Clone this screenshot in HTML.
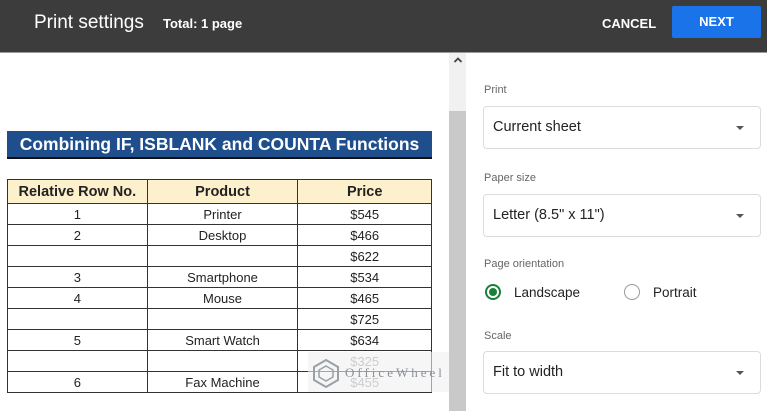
<!DOCTYPE html>
<html><head><style>
*{margin:0;padding:0;box-sizing:border-box}
body{width:767px;height:411px;overflow:hidden;background:#fff;font-family:"Liberation Sans",Arial,sans-serif;position:relative}
.hdr{position:absolute;left:0;top:0;width:767px;height:53px;background:#3c3c3c;border-bottom:1px solid #9a9a9a}
.t1{position:absolute;left:34px;top:12px;color:#fff;font-size:19px}
.t2{position:absolute;left:163px;top:16px;color:#fff;font-size:13px;font-weight:bold}
.cancel{position:absolute;left:602px;top:16px;color:#fff;font-size:13px;font-weight:bold}
.next{position:absolute;left:672px;top:6px;width:89px;height:32px;background:#1a73e8;color:#fff;font-size:13px;font-weight:bold;text-align:center;line-height:32px;border-radius:2px}
.track{position:absolute;left:449px;top:53px;width:17px;height:358px;background:#f1f1f1}
.thumb{position:absolute;left:449px;top:111px;width:17px;height:300px;background:#c9c9c9}
.panel{position:absolute;left:466px;top:53px;width:301px;height:358px;background:#fff}
.lbl{position:absolute;left:484px;font-size:11px;color:#666}
.sel{position:absolute;left:483px;width:278px;height:43px;border:1px solid #dadce0;border-radius:4px;font-size:14.5px;color:#222;padding:12px 0 0 9px}
.sel:after{content:"";position:absolute;right:16px;top:19px;border-left:4.5px solid transparent;border-right:4.5px solid transparent;border-top:4.5px solid #555}
.title{position:absolute;left:7px;top:131px;width:425px;height:28px;background:#1f4e8c;border-bottom:2px solid #111;color:#fff;font-weight:bold;font-size:17.5px;text-align:center;line-height:27px}
table{position:absolute;left:7px;top:179px;width:425px;border-collapse:collapse;font-size:13px;color:#222}
td{border:1px solid #333;height:21px;text-align:center;padding:0}
tr.h td{background:#fdf0cc;font-weight:bold;font-size:14.5px;height:24px;border-width:1.5px}
</style></head><body>
<div class="hdr"><div class="t1">Print settings</div><div class="t2">Total: 1 page</div><div class="cancel">CANCEL</div><div class="next">NEXT</div></div>
<div class="title">Combining IF, ISBLANK and COUNTA Functions</div>
<table>
<col style="width:140px"><col style="width:151px"><col style="width:134px">
<tr class="h"><td>Relative Row No.</td><td>Product</td><td>Price</td></tr>
<tr><td>1</td><td>Printer</td><td>$545</td></tr>
<tr><td>2</td><td>Desktop</td><td>$466</td></tr>
<tr><td></td><td></td><td>$622</td></tr>
<tr><td>3</td><td>Smartphone</td><td>$534</td></tr>
<tr><td>4</td><td>Mouse</td><td>$465</td></tr>
<tr><td></td><td></td><td>$725</td></tr>
<tr><td>5</td><td>Smart Watch</td><td>$634</td></tr>
<tr><td></td><td></td><td style="color:#999">$325</td></tr>
<tr><td>6</td><td>Fax Machine</td><td style="color:#999">$455</td></tr>
</table>
<div style="position:absolute;left:308px;top:352px;width:150px;height:40px;background:rgba(240,240,240,.6)"></div>
<div style="position:absolute;left:345px;top:365px;font-family:'Liberation Serif',serif;font-size:13px;letter-spacing:3px;color:#8a9099">OfficeWheel</div>
<svg style="position:absolute;left:312px;top:358px" width="28" height="30"><polygon points="14,2 26,9 26,22 14,29 2,22 2,9" fill="none" stroke="#9aa0a8" stroke-width="2"/><polygon points="14,8 21,12 21,19 14,23 7,19 7,12" fill="none" stroke="#9aa0a8" stroke-width="1.5"/></svg>
<div class="track"></div><div class="thumb"></div>
<svg style="position:absolute;left:453px;top:56px" width="10" height="8"><path d="M1.5 6 L5 2.5 L8.5 6" fill="none" stroke="#444" stroke-width="1.8"/></svg>
<div class="panel"></div>
<div class="lbl" style="top:84px">Print</div>
<div class="sel" style="top:106px">Current sheet</div>
<div class="lbl" style="top:172px">Paper size</div>
<div class="sel" style="top:194px">Letter (8.5" x 11")</div>
<div class="lbl" style="top:258px">Page orientation</div>
<div style="position:absolute;left:485px;top:284px;width:16px;height:16px;border:2px solid #188038;border-radius:50%"><div style="position:absolute;left:2px;top:2px;width:8px;height:8px;background:#188038;border-radius:50%"></div></div>
<div style="position:absolute;left:514px;top:285px;font-size:13.5px;color:#222">Landscape</div>
<div style="position:absolute;left:624px;top:284px;width:16px;height:16px;border:1.5px solid #999;border-radius:50%"></div>
<div style="position:absolute;left:653px;top:285px;font-size:13.5px;color:#222">Portrait</div>
<div class="lbl" style="top:330px">Scale</div>
<div class="sel" style="top:351px">Fit to width</div>
</body></html>
